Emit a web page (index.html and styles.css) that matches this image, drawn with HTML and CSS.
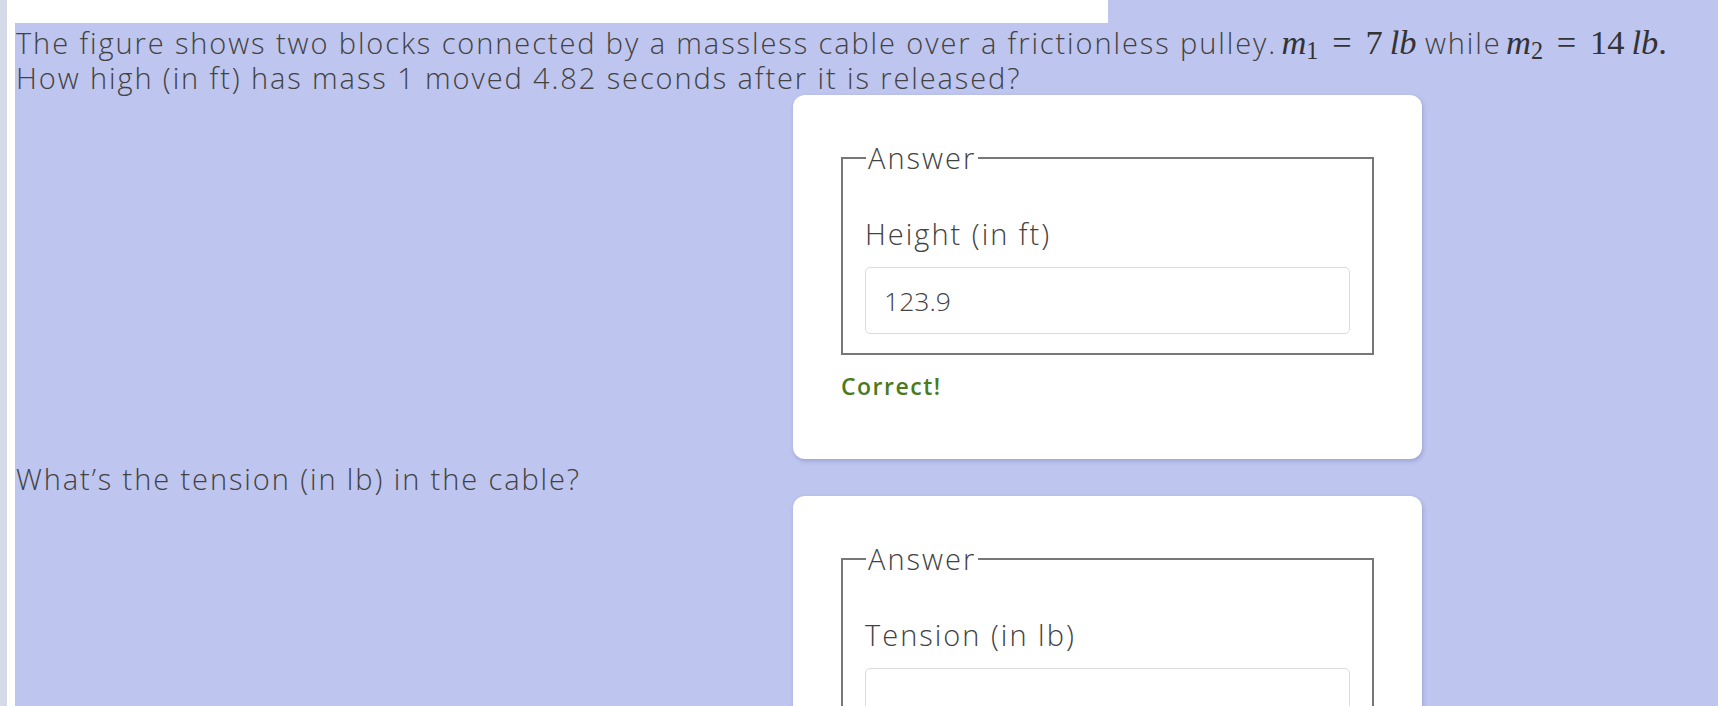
FILE: index.html
```html
<!DOCTYPE html>
<html lang="en">
<head>
<meta charset="utf-8">
<title>Pulley problem</title>
<link rel="stylesheet" href="styles.css">
</head>
<body>
<div class="page">
  <div class="rail"></div>
  <main class="main">
    <div class="topbar"></div>
    <p class="question">The figure shows two blocks connected by a massless cable over a frictionless pulley. <span class="math"><i>m</i><sub>1</sub><span class="rel">=</span>7<i class="unit">lb</i></span> while <span class="math"><i>m</i><sub>2</sub><span class="rel">=</span>14<i class="unit">lb</i>.</span><br>How high (in ft) has mass 1 moved 4.82 seconds after it is released?</p>
    <section class="card">
      <fieldset class="answer">
        <legend>Answer</legend>
        <label class="field-label" for="height">Height (in ft)</label>
        <input class="field-input" id="height" type="text" value="123.9">
      </fieldset>
      <p class="feedback">Correct!</p>
    </section>
    <p class="question">What’s the tension (in lb) in the cable?</p>
    <section class="card">
      <fieldset class="answer">
        <legend>Answer</legend>
        <label class="field-label" for="tension">Tension (in lb)</label>
        <input class="field-input" id="tension" type="text" value="">
      </fieldset>
      <p class="feedback">&nbsp;</p>
    </section>
  </main>
</div>
</body>
</html>
```

FILE: styles.css
```css
html, body {
  margin: 0;
  padding: 0;
}

body {
  font-family: "Open Sans", "Noto Sans", "DejaVu Sans", sans-serif;
  color: #424242;
  background: #bec5ef;
}

.page {
  display: flex;
  min-height: 100vh;
}

.rail {
  flex: none;
  width: 7px;
  background: #d5dae8;
}

.main {
  flex: 1;
  min-width: 0;
  border-left: 8px solid #ffffff;
  background: #bec5ef;
}

.topbar {
  width: 1093px;
  height: 23px;
  background: #ffffff;
}

.question {
  margin: 0;
  padding: 2px 0 0 1px;
  font-size: 29px;
  font-weight: 300;
  line-height: 35px;
  letter-spacing: 1.9px;
}

.math {
  margin: 0 -1px 0 -5px;
  font-family: "Liberation Serif", "Times New Roman", serif;
  font-size: 34.5px;
  letter-spacing: 0;
  line-height: 0;
  color: #333333;
  white-space: nowrap;
}

.math i {
  font-style: italic;
}

.math sub {
  font-size: 0.7em;
  vertical-align: -0.22em;
  line-height: 0;
  font-style: normal;
}

.math .rel {
  margin: 0 0.4em;
}

.math .unit {
  margin-left: 0.2em;
}

.card {
  box-sizing: border-box;
  width: 629px;
  margin-left: 778px;
  padding: 45px 48px 55px;
  background: #ffffff;
  border-radius: 12px;
  box-shadow: 1px 2px 4px rgba(70, 80, 150, 0.3);
}

.answer {
  margin: 0;
  min-width: 0;
  padding: 40px 22px 19px;
  border: 2px solid #777777;
}

.answer legend {
  padding: 0 2px;
  margin-left: 1px;
  font-size: 29px;
  font-weight: 300;
  line-height: 36px;
  letter-spacing: 2px;
}

.field-label {
  display: block;
  margin-bottom: 15px;
  font-size: 29px;
  font-weight: 300;
  line-height: 36px;
  letter-spacing: 2px;
}

.field-input {
  display: block;
  box-sizing: border-box;
  width: 100%;
  height: 67px;
  margin: 0;
  padding: 0 18px;
  border: 1px solid #dcdcdc;
  border-radius: 5px;
  background: #ffffff;
  font-family: "Open Sans", "Noto Sans", sans-serif;
  font-size: 26.5px;
  font-weight: 300;
  color: #424242;
  outline: none;
}

.feedback {
  margin: 13px 0 0;
  font-size: 23px;
  font-weight: 600;
  line-height: 36px;
  letter-spacing: 1.5px;
  color: #4a7a1c;
}
```
